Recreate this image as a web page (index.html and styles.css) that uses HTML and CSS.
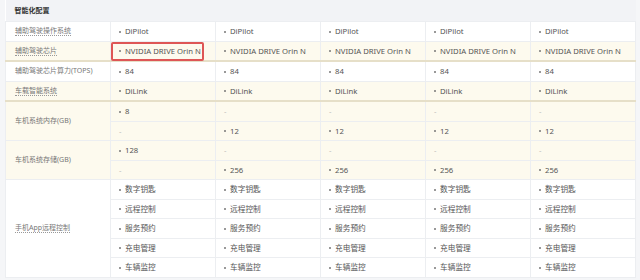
FILE: index.html
```html
<!DOCTYPE html>
<html lang="zh">
<head>
<meta charset="utf-8">
<link rel="stylesheet" href="styles.css">
</head>
<body>
<div class="wrap">
<table class="spec">
  <colgroup><col class="c-label"><col><col><col><col><col></colgroup>
  <tr class="head"><th colspan="6">智能化配置</th></tr>
  <tr>
    <td class="label"><span class="link">辅助驾驶操作系统</span></td>
    <td><span class="dot"></span>DiPilot</td><td><span class="dot"></span>DiPilot</td><td><span class="dot"></span>DiPilot</td><td><span class="dot"></span>DiPilot</td><td><span class="dot"></span>DiPilot</td>
  </tr>
  <tr class="hl sep">
    <td class="label"><span class="link">辅助驾驶芯片</span></td>
    <td class="boxed"><span class="mark"></span><span class="dot"></span>NVIDIA DRIVE Orin N</td><td><span class="dot"></span>NVIDIA DRIVE Orin N</td><td><span class="dot"></span>NVIDIA DRIVE Orin N</td><td><span class="dot"></span>NVIDIA DRIVE Orin N</td><td><span class="dot"></span>NVIDIA DRIVE Orin N</td>
  </tr>
  <tr>
    <td class="label">辅助驾驶芯片算力(TOPS)</td>
    <td><span class="dot"></span>84</td><td><span class="dot"></span>84</td><td><span class="dot"></span>84</td><td><span class="dot"></span>84</td><td><span class="dot"></span>84</td>
  </tr>
  <tr class="hl sep">
    <td class="label"><span class="link">车载智能系统</span></td>
    <td><span class="dot"></span>DiLink</td><td><span class="dot"></span>DiLink</td><td><span class="dot"></span>DiLink</td><td><span class="dot"></span>DiLink</td><td><span class="dot"></span>DiLink</td>
  </tr>
  <tr class="hl">
    <td class="label" rowspan="2">车机系统内存(GB)</td>
    <td><span class="dot"></span>8</td><td class="na">-</td><td class="na">-</td><td class="na">-</td><td class="na">-</td>
  </tr>
  <tr class="hl">
    <td class="na">-</td><td><span class="dot"></span>12</td><td><span class="dot"></span>12</td><td><span class="dot"></span>12</td><td><span class="dot"></span>12</td>
  </tr>
  <tr class="hl">
    <td class="label" rowspan="2">车机系统存储(GB)</td>
    <td><span class="dot"></span>128</td><td class="na">-</td><td class="na">-</td><td class="na">-</td><td class="na">-</td>
  </tr>
  <tr class="hl">
    <td class="na">-</td><td><span class="dot"></span>256</td><td><span class="dot"></span>256</td><td><span class="dot"></span>256</td><td><span class="dot"></span>256</td>
  </tr>
  <tr>
    <td class="label" rowspan="5"><span class="link">手机App远程控制</span></td>
    <td><span class="dot"></span>数字钥匙</td><td><span class="dot"></span>数字钥匙</td><td><span class="dot"></span>数字钥匙</td><td><span class="dot"></span>数字钥匙</td><td><span class="dot"></span>数字钥匙</td>
  </tr>
  <tr>
    <td><span class="dot"></span>远程控制</td><td><span class="dot"></span>远程控制</td><td><span class="dot"></span>远程控制</td><td><span class="dot"></span>远程控制</td><td><span class="dot"></span>远程控制</td>
  </tr>
  <tr>
    <td><span class="dot"></span>服务预约</td><td><span class="dot"></span>服务预约</td><td><span class="dot"></span>服务预约</td><td><span class="dot"></span>服务预约</td><td><span class="dot"></span>服务预约</td>
  </tr>
  <tr>
    <td><span class="dot"></span>充电管理</td><td><span class="dot"></span>充电管理</td><td><span class="dot"></span>充电管理</td><td><span class="dot"></span>充电管理</td><td><span class="dot"></span>充电管理</td>
  </tr>
  <tr>
    <td><span class="dot"></span>车辆监控</td><td><span class="dot"></span>车辆监控</td><td><span class="dot"></span>车辆监控</td><td><span class="dot"></span>车辆监控</td><td><span class="dot"></span>车辆监控</td>
  </tr>
</table>
</div>
</body>
</html>
```

FILE: styles.css
```css
html, body {
  margin: 0;
  padding: 0;
  background: #f5f6f8;
}
.wrap {
  padding: 0 4px 0 5px;
  width: 631px;
}
.spec {
  width: 631px;
  border-collapse: collapse;
  table-layout: fixed;
  font-family: "Noto Sans", "Noto Sans CJK SC", sans-serif;
  font-size: 7.7px;
  color: #555;
  background: #fff;
}
.spec col { width: 105px; }
.spec col.c-label { width: 105px; }
.spec th, .spec td {
  border: 1px solid #eceef1;
  height: 18.5px;
  padding: 0 0 0 8px;
  text-align: left;
  vertical-align: middle;
  white-space: nowrap;
  line-height: 10px;
}
.spec tr.head th {
  height: 21px;
  background: #f2f3f6;
  font-weight: 700;
  font-size: 7px;
  color: #333;
  padding-left: 9px;
  border-top: none;
  border-left: none;
  border-right: none;
}
.spec td.label {
  color: #777;
  font-size: 7px;
  padding-left: 9px;
}
.link {
  border-bottom: 1px dotted #999;
  padding-bottom: 0;
}
.spec tr.hl td { background: #fdfaee; }
.spec tr.sep td { border-bottom: 2px solid #e6dfc8; }
.dot {
  display: inline-block;
  width: 2px;
  height: 2px;
  border-radius: 50%;
  background: #777;
  margin: 0 4px 1px 0;
  vertical-align: middle;
}
.spec td.na { color: #bbb; }
.boxed { position: relative; }
.mark {
  position: absolute;
  left: 0;
  top: 0;
  width: 89px;
  height: 15px;
  border: 2px solid #de5656;
  border-radius: 2px;
}
```
